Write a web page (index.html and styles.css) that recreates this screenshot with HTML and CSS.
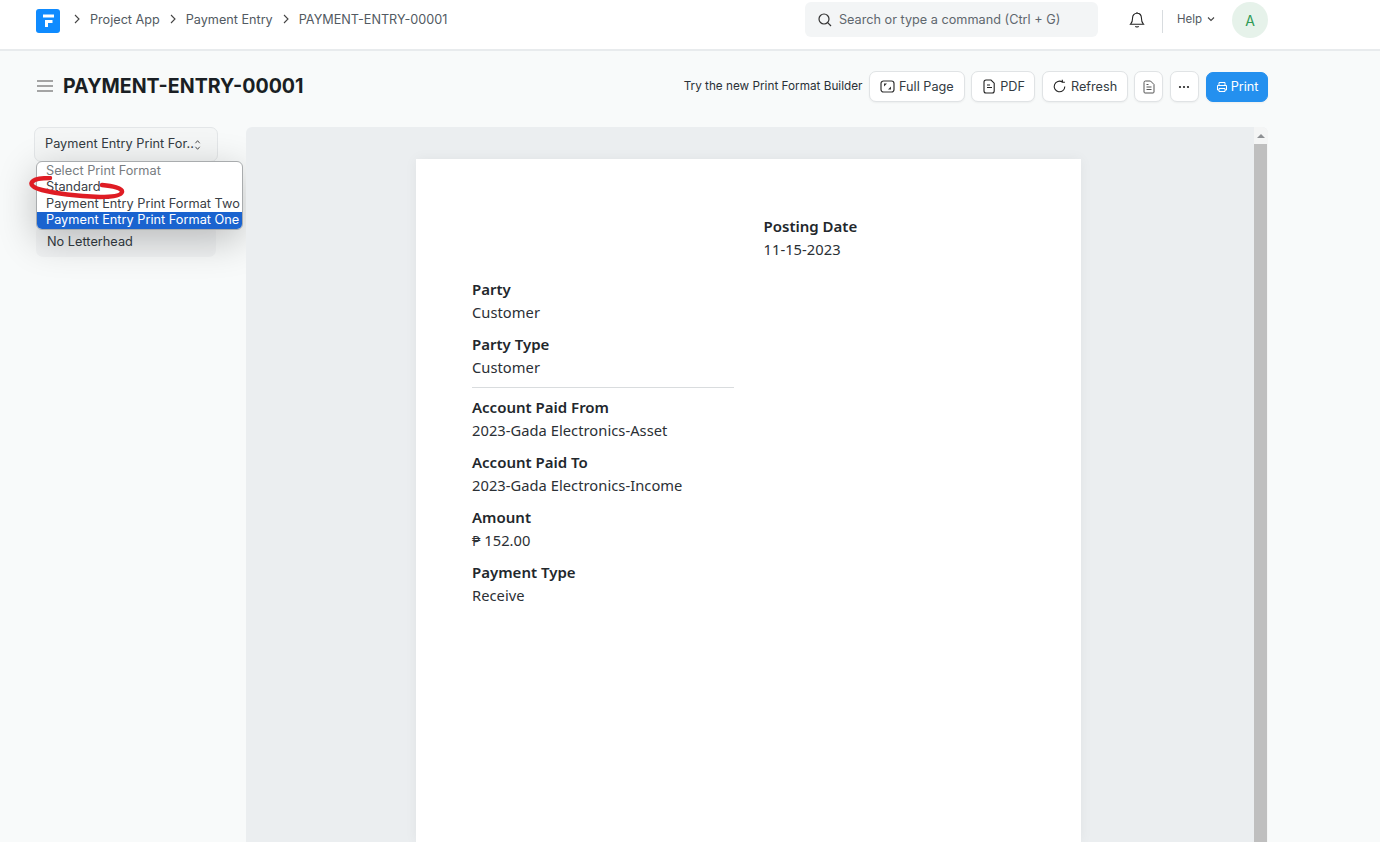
FILE: index.html
```html
<!DOCTYPE html>
<html lang="en">
<head>
<meta charset="utf-8">
<title>PAYMENT-ENTRY-00001</title>
<link rel="stylesheet" href="styles.css">
</head>
<body>
<header class="navbar">
  <div class="nav-left">
    <span class="logo"><svg width="24" height="24" viewBox="0 0 24 24"><rect width="24" height="24" rx="3" fill="#0f8bff"/><path d="M7 5.500h11v3H7zM9 11h7.500v3H12v4H9z" fill="#fff"/></svg></span>
    <nav class="crumbs">
      <svg class="chev" width="8" height="10" viewBox="0 0 8 10"><path d="M2 1l4 4-4 4" fill="none" stroke="#444" stroke-width="1.100"/></svg><span>Project App</span>
      <svg class="chev" width="8" height="10" viewBox="0 0 8 10"><path d="M2 1l4 4-4 4" fill="none" stroke="#444" stroke-width="1.100"/></svg><span>Payment Entry</span>
      <svg class="chev" width="8" height="10" viewBox="0 0 8 10"><path d="M2 1l4 4-4 4" fill="none" stroke="#444" stroke-width="1.100"/></svg><span>PAYMENT-ENTRY-00001</span>
    </nav>
  </div>
  <div class="nav-right">
    <div class="search">
      <svg width="16" height="16" viewBox="0 0 16 16"><circle cx="7" cy="7" r="5" fill="none" stroke="#333" stroke-width="1.200"/><path d="M10.700 10.700L14 14" stroke="#333" stroke-width="1.200"/></svg>
      <span>Search or type a command (Ctrl + G)</span>
    </div>
    <svg class="bell" width="18" height="18" viewBox="0 0 18 18"><path d="M9 2.200c-2.800 0-4.400 2-4.400 4.600 0 3.400-.6 5-2 6.400h12.800c-1.400-1.400-2-3-2-6.400 0-2.600-1.600-4.600-4.400-4.600zM7.400 15.200c.4 1 2.800 1 3.200 0M9 1v1.200" fill="none" stroke="#222" stroke-width="1.100"/></svg>
    <span class="nav-sep"></span>
    <span class="help">Help <svg width="8" height="6" viewBox="0 0 8 6"><path d="M1 1.500l3 3 3-3" fill="none" stroke="#444" stroke-width="1.100"/></svg></span>
    <span class="avatar">A</span>
  </div>
</header>

<main class="page">
  <div class="page-head">
    <div class="title-wrap">
      <svg width="16" height="14" viewBox="0 0 16 14"><path d="M0 2h16M0 7h16M0 12h16" stroke="#888" stroke-width="1.400"/></svg>
      <h1>PAYMENT-ENTRY-00001</h1>
    </div>
    <div class="actions">
      <span class="try">Try the new Print Format Builder</span>
      <button class="btn"><svg width="15" height="15" viewBox="0 0 15 15"><rect x="1" y="2" width="13" height="11" rx="2.500" fill="none" stroke="#333" stroke-width="1.200"/><path d="M4 4.500h3L4 7.500zM11 10.500H8l3-3z" fill="#333"/></svg>Full Page</button>
      <button class="btn tight"><svg width="15" height="15" viewBox="0 0 15 15"><path d="M4 1h5l3.200 3.200V12a2 2 0 0 1-2 2H4a2 2 0 0 1-2-2V3a2 2 0 0 1 2-2z" fill="none" stroke="#222" stroke-width="1.100"/><path d="M5 6h3M5 8.500h5" stroke="#222" stroke-width="1.100"/></svg>PDF</button>
      <button class="btn tight"><svg width="15" height="15" viewBox="0 0 15 15"><path d="M12.800 7.500A5.300 5.300 0 1 1 10.300 3M10.300 .8v2.500h2.600" fill="none" stroke="#222" stroke-width="1.100"/></svg>Refresh</button>
      <button class="btn icon"><svg width="14" height="14" viewBox="0 0 14 14"><path d="M3.500 1h5L12 4.500V12a1 1 0 0 1-1 1H3a1 1 0 0 1-1-1V2.500A1.500 1.500 0 0 1 3.500 1z" fill="none" stroke="#555"/><path d="M4.500 7h5M4.500 9.500h5M4.500 4.500h2" stroke="#555"/></svg></button>
      <button class="btn icon"><svg width="12" height="4" viewBox="0 0 12 4"><circle cx="2" cy="2" r="1.100" fill="#222"/><circle cx="6" cy="2" r="1.100" fill="#222"/><circle cx="10" cy="2" r="1.100" fill="#222"/></svg></button>
      <button class="btn primary"><svg width="12" height="12" viewBox="0 0 12 12"><path d="M3 4V1.500h6V4M3 9H1.500V4.500h9V9H9M3 7.500h6v3H3z" fill="none" stroke="#fff"/></svg>Print</button>
    </div>
  </div>

  <div class="content">
    <aside class="sidebar">
      <div class="select-box first">
        <span class="select-text">Payment Entry Print For..</span>
        <svg class="updown" width="10" height="14" viewBox="0 0 10 14"><path d="M2 4.500l3-3.500 3 3.500M2 9.500l3 3.500 3-3.500" fill="none" stroke="#222" stroke-width="1.100"/></svg>
      </div>
      <div class="select-box second"><span class="select-text">No Letterhead</span></div>
      <ul class="popup">
        <li class="muted">Select Print Format</li>
        <li>Standard</li>
        <li>Payment Entry Print Format Two</li>
        <li class="active">Payment Entry Print Format One</li>
      </ul>
      <svg class="scribble" width="100" height="26" viewBox="0 0 100 26"><path d="M74 9C84 10 95 12 94 16C93 20 82 21 72 21C50 20 30 18 14 14C6 12 2 9 4 6C6 3 13 2 22 2" fill="none" stroke="#df1c24" stroke-width="4.400" stroke-linecap="round"/></svg>
    </aside>
    <section class="preview">
      <article class="paper">
        <div class="row">
          <div class="col"></div>
          <div class="col">
            <p class="label">Posting Date</p>
            <p class="value">11-15-2023</p>
          </div>
        </div>
        <div class="row gap-top">
          <div class="col">
            <p class="label">Party</p>
            <p class="value">Customer</p>
            <p class="label">Party Type</p>
            <p class="value">Customer</p>
            <hr class="rule">
            <p class="label">Account Paid From</p>
            <p class="value">2023-Gada Electronics-Asset</p>
            <p class="label">Account Paid To</p>
            <p class="value">2023-Gada Electronics-Income</p>
            <p class="label">Amount</p>
            <p class="value">₱ 152.00</p>
            <p class="label">Payment Type</p>
            <p class="value">Receive</p>
          </div>
          <div class="col"></div>
        </div>
      </article>
      <div class="scrollbar">
        <span class="arrow"></span>
        <span class="thumb"></span>
      </div>
    </section>
  </div>
</main>
</body>
</html>
```
FILE: styles.css
```css
* { box-sizing: border-box; }
html, body { margin: 0; height: 100%; overflow: hidden; }
body {
  background: #f8fafa;
  color: #1f272e;
  font-family: Inter, "Liberation Sans", sans-serif;
  font-size: 12.600px;
}
.navbar {
  height: 51px;
  background: #fff;
  border-bottom: 2px solid #e8ebed;
  display: flex;
  justify-content: space-between;
  padding: 0 112px 0 36px;
}
.nav-left { display: flex; align-items: flex-start; padding-top: 9px; }
.logo { display: block; height: 24px; }
.crumbs { display: flex; align-items: center; height: 20px; margin-left: 13px; color: #525a62; font-size: 12.650px; }
.chev { margin-right: 9px; }
.crumbs span { margin-right: 9px; }
.nav-right { display: flex; align-items: flex-start; padding-top: 2px; }
.search {
  width: 293px;
  height: 35px;
  background: #f3f5f6;
  border-radius: 6px;
  display: flex;
  align-items: center;
  gap: 6px;
  padding-left: 12px;
  color: #5f676e;
  font-size: 12.700px;
}
.bell { margin: 9px 0 0 30px; }
.nav-sep { width: 1px; height: 23px; margin: 8px 0 0 16px; background: #d8dcdf; }
.help { margin: 10px 0 0 14px; display: flex; align-items: center; gap: 5px; color: #525a62; font-size: 11.500px; }
.avatar {
  width: 36px;
  height: 36px;
  margin-left: 17px;
  border-radius: 50%;
  background: #e6f2ea;
  color: #2f9a57;
  font-size: 14px;
  display: flex;
  align-items: center;
  justify-content: center;
}
.page-head {
  height: 76px;
  display: flex;
  justify-content: space-between;
  align-items: flex-start;
  padding: 20px 112px 0 37px;
}
.title-wrap { display: flex; align-items: center; gap: 10px; height: 29px; }
.title-wrap h1 { margin: 0; font-size: 19.600px; font-weight: 700; color: #1a1f24; }
.actions { display: flex; align-items: center; gap: 6.500px; }
.try { font-size: 11.750px; color: #2a3137; margin: -1px 0 0 -1px; }
.btn {
  height: 31px;
  border: 1px solid #e0e3e5;
  border-radius: 7px;
  background: #fff;
  color: #333b42;
  font-family: inherit;
  font-size: 12.700px;
  padding: 0 10px;
  display: flex;
  align-items: center;
  gap: 4px;
  box-shadow: 0 1px 2px rgba(0,0,0,.05);
}
.btn.tight { padding: 0 9.500px; gap: 3.500px; }
.btn.icon { width: 29px; padding: 0; justify-content: center; }
.btn.primary { height: 30px; margin-left: 1px; background: #2490ef; border-color: #2490ef; color: #fff; padding: 0 8.500px; gap: 3px; }
.content { display: flex; padding-left: 34px; height: 715px; }
.sidebar { position: relative; width: 212px; flex: none; }
.select-box {
  display: flex;
  align-items: center;
  width: 184px;
  border-radius: 7px;
  color: #333b42;
  font-size: 12.750px;
  white-space: nowrap;
}
.select-box.first {
  height: 35px;
  padding: 0 16px 2px 10px;
  justify-content: space-between;
  background: #f4f6f6;
  border: 1px solid #e3e6e8;
}
.updown { margin-top: 2px; }
.select-box.second {
  width: 180px;
  height: 32px;
  margin: 63px 0 0 2px;
  padding-left: 11px;
  background: #f1f3f4;
}
.popup {
  position: absolute;
  left: 2px;
  top: 34px;
  width: 206.500px;
  margin: 0;
  padding: .6px 0 0;
  list-style: none;
  background: #fff;
  border: 1px solid #a9acae;
  border-radius: 6px;
  overflow: hidden;
  font-size: 12.750px;
  color: #3a4046;
  box-shadow: 0 10px 38px rgba(0,0,0,.24);
}
.popup li { height: 16.500px; line-height: 16.500px; padding-left: 9px; white-space: nowrap; }
.popup .muted { color: #777c80; }
.popup .active { background: #1a63cf; color: #fff; }
.scribble { position: absolute; left: -6px; top: 49px; }
.preview {
  flex: none;
  position: relative;
  width: 1022px;
  background: #ebeef0;
  border-radius: 6px 6px 0 0;
  display: flex;
  justify-content: space-between;
  padding-left: 170px;
}
.paper {
  width: 665px;
  margin-top: 32px;
  background: #fff;
  padding: 56px 41px 0 41px;
  box-shadow: 0 0 12px rgba(0,0,0,.05);
}
.row { display: flex; }
.gap-top { margin-top: 17px; }
.col { width: 291.500px; padding: 0 15px; }
.label, .value { margin: 0; font-family: "Noto Sans", "Open Sans", sans-serif; line-height: 23px; color: #22272c; }
.value { font-size: 14.700px; letter-spacing: .04px; color: #2b3035; }
.label { font-size: 15px; font-weight: 600; margin-top: 9px; }
.row .col > .label:first-child { margin-top: 0; }
.rule { border: 0; border-top: 1px solid #d9dcde; margin: 8px 0 0; }
.rule + .label { margin-top: 8px; }
.scrollbar { width: 14px; flex: none; background: #f4f5f5; display: flex; flex-direction: column; align-items: flex-start; border-top-right-radius: 6px; }
.arrow { width: 0; height: 0; margin: 7px 0 6px 3px; border: 4px solid transparent; border-top: 0; border-bottom: 4px solid #8d9093; }
.thumb { flex: 1; width: 13px; background: #bfbfbf; }
```
